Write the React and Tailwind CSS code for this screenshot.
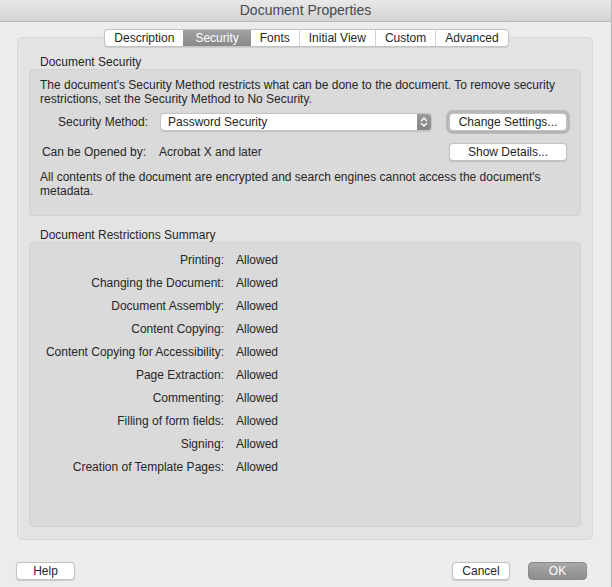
import React from 'react';

const tabs = ['Description', 'Security', 'Fonts', 'Initial View', 'Custom', 'Advanced'];

const restrictions = [
  'Printing',
  'Changing the Document',
  'Document Assembly',
  'Content Copying',
  'Content Copying for Accessibility',
  'Page Extraction',
  'Commenting',
  'Filling of form fields',
  'Signing',
  'Creation of Template Pages',
];

const Button = ({ children, className = '' }) => (
  <button
    type="button"
    className={`h-[18px] bg-white border border-[#c4c4c4] rounded-[4px] shadow-[0_0.5px_1px_rgba(0,0,0,0.15)] text-[12px] leading-[16px] text-[#262626] ${className}`}
  >
    {children}
  </button>
);

const App = () => {
  return (
    <div className="w-[612px] h-[587px] bg-[#ececec] flex flex-col text-[#262626] text-[12px] font-['Liberation_Sans',Arial,sans-serif] border-r border-[#b5b5b5] overflow-hidden">
      {/* title bar */}
      <div className="h-[22px] shrink-0 bg-gradient-to-b from-[#e9e9e9] to-[#d2d2d2] border-b border-[#b9b9b9] flex items-center justify-center text-[14px] text-[#4a4a4a]">
        Document Properties
      </div>

      {/* tabs */}
      <div className="relative z-10 mt-[7px] flex justify-center pl-[2px]">
        <div className="flex h-[18px] bg-white border border-[#c3c3c3] rounded-[4px] overflow-hidden shadow-[0_0.5px_1px_rgba(0,0,0,0.1)]">
          {tabs.map((t, i) => (
            <div
              key={t}
              className={
                t === 'Security'
                  ? 'px-[12px] leading-[16px] bg-gradient-to-b from-[#a2a2a2] to-[#888888] text-white'
                  : `px-[9px] leading-[16px] ${i > 0 && tabs[i - 1] !== 'Security' ? 'border-l border-[#d4d4d4]' : ''}`
              }
            >
              {t}
            </div>
          ))}
        </div>
      </div>

      {/* tab view box */}
      <div className="-mt-[10px] ml-[17px] w-[576px] h-[503px] bg-[#e3e3e3] border border-[#d8d8d8] rounded-[5px] pt-[17px] px-[11px] pb-[12px] flex flex-col">
        <div className="h-[14px] leading-[14px] pl-[11px]">Document Security</div>
        <div className="h-[147px] shrink-0 bg-[#dadada] border border-[#d2d2d2] rounded-[4px] pt-[8px]">
          <p className="px-[10px] leading-[14px]">
            The document's Security Method restricts what can be done to the document. To remove security
            restrictions, set the Security Method to No Security.
          </p>
          <div className="flex items-center mt-[7px] h-[18px]">
            <div className="w-[118px] text-right">Security Method:</div>
            <div className="ml-[12px] w-[272px] h-[18px] flex bg-white border border-[#c4c4c4] rounded-[4px] overflow-hidden shadow-[0_0.5px_1px_rgba(0,0,0,0.12)]">
              <div className="flex-1 pl-[7px] leading-[16px]">Password Security</div>
              <div className="w-[14px] bg-gradient-to-b from-[#9c9c9c] to-[#858585] flex items-center justify-center">
                <svg width="8" height="12" viewBox="0 0 8 12" fill="none" stroke="white" strokeWidth="1.3" strokeLinecap="round" strokeLinejoin="round">
                  <path d="M1.5 4.5 L4 2 L6.5 4.5" />
                  <path d="M1.5 7.5 L4 10 L6.5 7.5" />
                </svg>
              </div>
            </div>
            <Button className="ml-[17px] w-[118px] ring-[3px] ring-[#a9a9a9]/70">Change Settings...</Button>
          </div>
          <div className="flex items-center mt-[12px] h-[18px]">
            <div className="w-[116px] text-right">Can be Opened by:</div>
            <div className="ml-[13px] w-[272px]">Acrobat X and later</div>
            <Button className="ml-[18px] w-[118px]">Show Details...</Button>
          </div>
          <p className="px-[10px] mt-[9px] leading-[14px]">
            All contents of the document are encrypted and search engines cannot access the document's
            metadata.
          </p>
        </div>

        <div className="mt-[12px] h-[14px] leading-[14px] pl-[11px]">Document Restrictions Summary</div>
        <div className="flex-1 bg-[#dadada] border border-[#d2d2d2] rounded-[4px] pt-[5px]">
          {restrictions.map((r) => (
            <div key={r} className="flex h-[23px] items-center">
              <div className="w-[194px] text-right">{r}:</div>
              <div className="ml-[12px]">Allowed</div>
            </div>
          ))}
        </div>
      </div>

      {/* bottom buttons */}
      <div className="flex items-center mt-[22px] pl-[16px] pr-[24px]">
        <Button className="w-[59px]">Help</Button>
        <div className="flex-1" />
        <Button className="w-[58px]">Cancel</Button>
        <button
          type="button"
          className="ml-[18px] w-[59px] h-[18px] rounded-[4px] bg-gradient-to-b from-[#a8a8a8] to-[#8c8c8c] text-white text-[12px] leading-[16px] border border-[#8a8a8a]"
        >
          OK
        </button>
      </div>
    </div>
  );
};

export default App;
